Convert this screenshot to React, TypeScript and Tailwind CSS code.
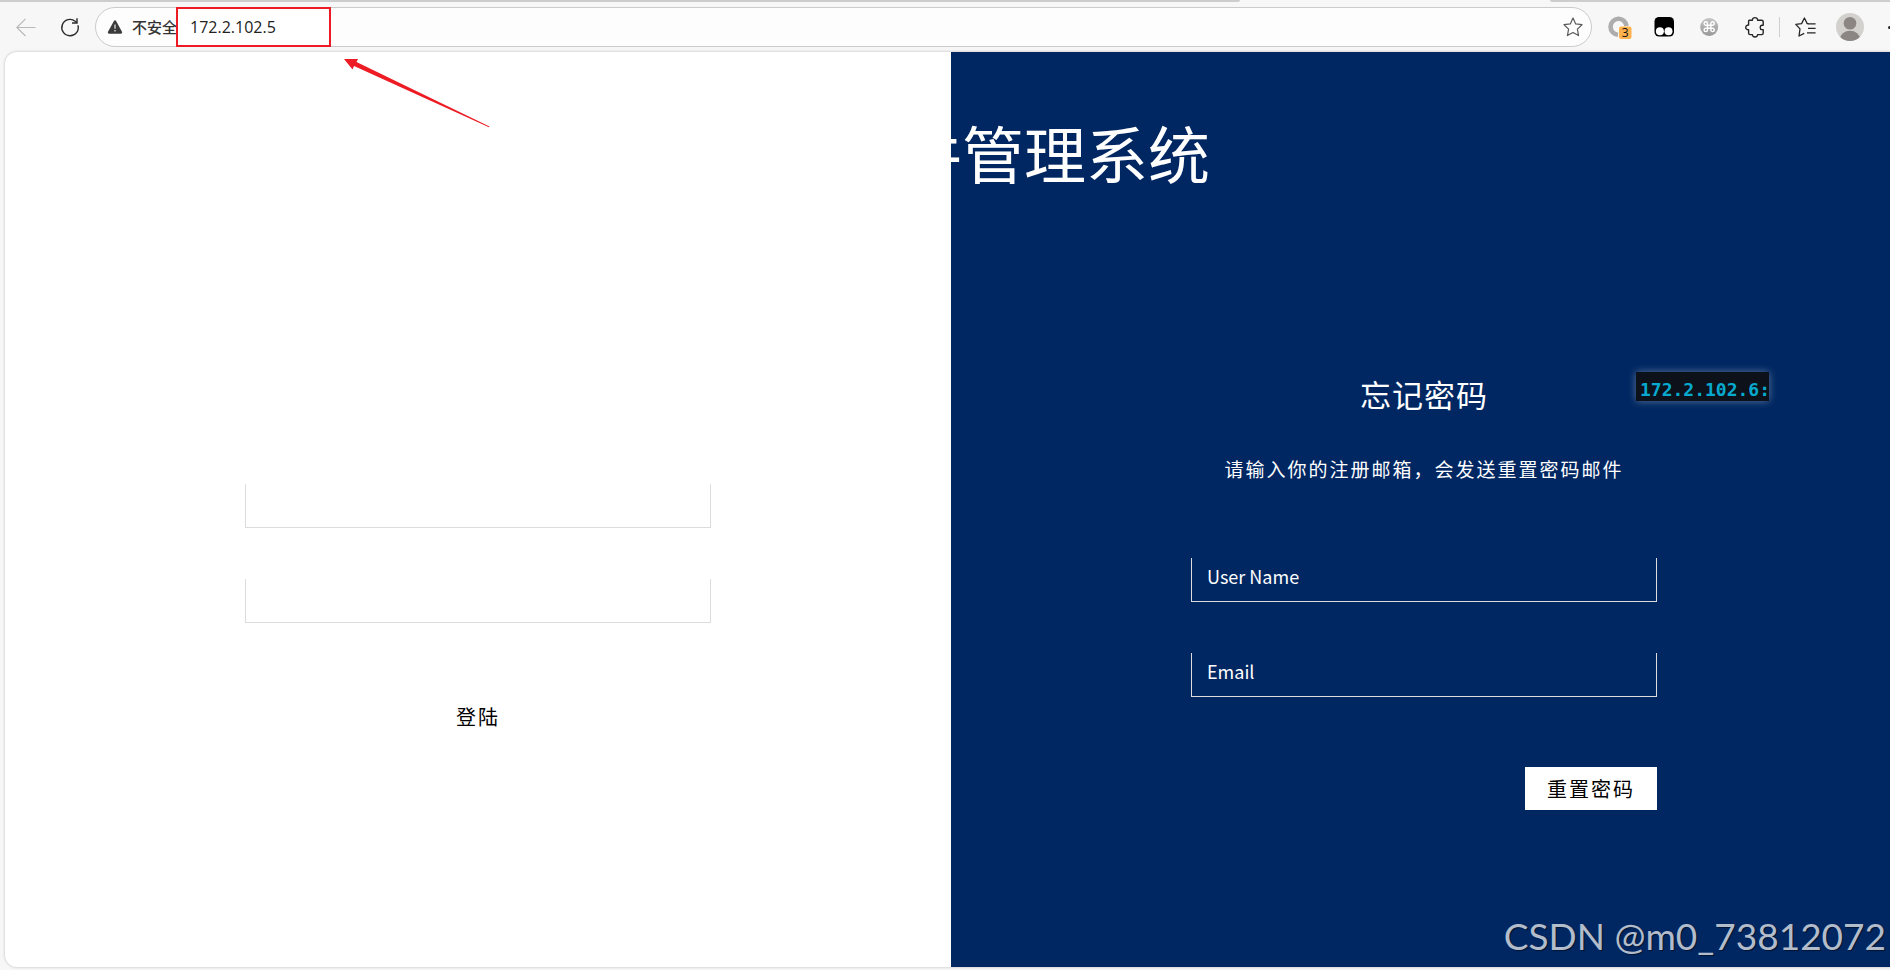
import { useState } from 'react';
import type { FormEvent, ReactNode } from 'react';

const BackIcon = () => (
  <svg viewBox="0 0 20 20" className="w-5 h-5" fill="none" stroke="#b9b9b9" strokeWidth="1.2">
    <path d="M19.5 10.5H0.8M9.5 1.8L0.8 10.5L9.5 19" />
  </svg>
);

const RefreshIcon = () => (
  <svg viewBox="0 0 20 20" className="w-5 h-5" fill="none" stroke="#2b2b2b" strokeWidth="1.4">
    <path d="M17.9 8.2A8.2 8.2 0 1 1 15.2 4.2L17 5.8" />
    <path d="M17 1.2V6H12" />
  </svg>
);

const WarningIcon = () => (
  <svg viewBox="0 0 16 16" className="w-4 h-4 shrink-0">
    <path d="M8 1.3c.5 0 .9.2 1.1.6l5.9 10.9c.5.9-.1 1.9-1.1 1.9H2.1c-1 0-1.6-1-1.1-1.9L6.9 1.9c.2-.4.6-.6 1.1-.6z" fill="#3b3b3b" />
    <path d="M8 5.5v4.2M8 11v1.6" stroke="#c8c8c8" strokeWidth="1.5" />
  </svg>
);

const StarIcon = () => (
  <svg viewBox="0 0 20 20" className="w-5 h-5" fill="none" stroke="#5a5a5a" strokeWidth="1.2" strokeLinejoin="round">
    <path d="M10 1.1L12.7 6.9L19 7.7L14.4 12.1L15.6 18.6L10 15.5L4.4 18.6L5.6 12.1L1 7.7L7.3 6.9Z" />
  </svg>
);

const ExtensionIcon = () => (
  <svg viewBox="0 0 24 24" className="w-6 h-6">
    <path d="M10 19.8A8 8 0 1 1 18.5 11" fill="none" stroke="#adadad" strokeWidth="4.6" />
    <rect x="11" y="11.5" width="12.5" height="12.5" rx="2" fill="#ffb24d" />
    <text x="17.2" y="22" fontSize="12" fontFamily="Open Sans, sans-serif" textAnchor="middle" fill="#111">3</text>
  </svg>
);

const MonkeyIcon = () => (
  <svg viewBox="0 0 24 24" className="w-6 h-6">
    <rect x="1.5" y="2" width="19.5" height="19.5" rx="4.5" fill="#000" />
    <circle cx="6.9" cy="16.3" r="4" fill="#fff" />
    <circle cx="15.5" cy="16.3" r="4" fill="#fff" />
  </svg>
);

const CommandIcon = () => (
  <svg viewBox="0 0 24 24" className="w-6 h-6">
    <defs>
      <linearGradient id="cmd" x1="0" y1="0" x2="0" y2="1">
        <stop offset="0" stopColor="#c4c4c4" />
        <stop offset="1" stopColor="#999" />
      </linearGradient>
    </defs>
    <circle cx="11.2" cy="12" r="9" fill="url(#cmd)" />
    <path
      d="M9.5 8.5v6.4a1.7 1.7 0 1 1-1.7-1.7h6.8a1.7 1.7 0 1 1-1.7 1.7V8.5a1.7 1.7 0 1 1 1.7 1.7H7.8a1.7 1.7 0 1 1 1.7-1.7z"
      fill="none"
      stroke="#fff"
      strokeWidth="1.4"
    />
  </svg>
);

const PuzzleIcon = () => (
  <svg viewBox="0 0 24 24" className="w-6 h-6" fill="none" stroke="#262626" strokeWidth="1.4" strokeLinejoin="round">
    <path d="M6.2 5.2H9.4C9.2 1.7 14.8 1.7 14.6 5.2H18.6C19.6 5.2 20.2 5.8 20.2 6.8V10.2H18.9C16.6 10.4 16.6 14.4 18.9 14.6H20.2V18C20.2 19 19.6 19.6 18.6 19.6H14.6C14.8 22.8 9.2 22.8 9.4 19.6H7.2C6.2 19.6 5.6 19 5.6 18V14.8C1.8 15 1.8 9.8 5.6 10V6.4C5.6 5.6 5.7 5.2 6.2 5.2Z" />
  </svg>
);

const FavoritesIcon = () => (
  <svg viewBox="0 0 24 24" className="w-6 h-6" fill="none" stroke="#262626" strokeWidth="1.3" strokeLinejoin="round">
    <path d="M14.6 8.6H13.2L10.4 3L7.6 8.6L1.8 9.4L6 13.9L5 21L10.2 18.3" />
    <path d="M13.8 8.8H21.6M14 13.3H21.6M13 17.8H21.6" />
  </svg>
);

const AvatarIcon = () => (
  <svg viewBox="0 0 28 28" className="w-7 h-7">
    <defs>
      <clipPath id="avatar">
        <circle cx="14" cy="14" r="14" />
      </clipPath>
    </defs>
    <g clipPath="url(#avatar)">
      <rect width="28" height="28" fill="#d3d1ce" />
      <circle cx="14" cy="10.2" r="6.3" fill="#8b8683" />
      <ellipse cx="14" cy="26" rx="10" ry="8.2" fill="#8b8683" />
    </g>
  </svg>
);

const IconButton = ({ label, children }: { label: string; children: ReactNode }) => (
  <button type="button" aria-label={label} className="shrink-0 cursor-pointer">
    {children}
  </button>
);

// Barra superior do navegador
const Toolbar = () => {
  const [url, setUrl] = useState('172.2.102.5');

  return (
    <header>
      {/* Borda inferior das abas */}
      <div className="flex h-0.5 justify-between">
        <div className="w-[1240px] bg-[#cdcdcd] rounded-br-sm"></div>
        <div className="w-[340px] bg-[#cdcdcd] rounded-bl-sm"></div>
      </div>

      <div className="flex items-center h-[50px] pl-4">
        <IconButton label="返回"><BackIcon /></IconButton>
        <div className="flex ml-6 mr-[15px]">
          <IconButton label="刷新"><RefreshIcon /></IconButton>
        </div>

        <div className="flex flex-1 items-center h-10 pl-[11px] pr-2 bg-[#fdfdfd] border border-[#cbcbcb] rounded-full">
          <WarningIcon />
          <span className="w-11 ml-[9px] text-[15px] font-medium text-[#333] whitespace-nowrap">不安全</span>
          <input
            type="text"
            aria-label="地址"
            value={url}
            onChange={(e) => setUrl(e.target.value)}
            className="w-[155px] h-10 px-3 bg-white border-2 border-[#ed1c24] font-['Open_Sans','Noto_Sans',sans-serif] text-base text-[#222] outline-none"
          />
          <div className="flex ml-auto">
            <IconButton label="收藏"><StarIcon /></IconButton>
          </div>
        </div>

        <div className="flex items-center gap-[21px] ml-4">
          <IconButton label="扩展"><ExtensionIcon /></IconButton>
          <IconButton label="脚本"><MonkeyIcon /></IconButton>
          <IconButton label="快捷键"><CommandIcon /></IconButton>
          <IconButton label="插件"><PuzzleIcon /></IconButton>
        </div>
        <div className="w-px h-5 ml-3 mr-[14px] bg-[#cfcfcf]"></div>
        <div className="flex items-center gap-[18px]">
          <IconButton label="收藏夹"><FavoritesIcon /></IconButton>
          <IconButton label="用户"><AvatarIcon /></IconButton>
        </div>
        <span className="w-0.5 h-[3px] ml-6 bg-[#262626] rounded-l-full"></span>
      </div>
    </header>
  );
};

const App = () => {
  const [login, setLogin] = useState({ usuario: '', senha: '' });
  const [reset, setReset] = useState({ usuario: '', email: '' });

  const handleSubmit = (e: FormEvent) => e.preventDefault();

  return (
    <div className="relative flex flex-col min-h-screen overflow-hidden bg-[#f7f7f7] font-['Noto_Sans_CJK_SC',sans-serif]">
      <Toolbar />

      <main className="grid grid-cols-2 flex-1 ml-[5px] -mr-[7px] mb-[3px] rounded-l-xl overflow-hidden bg-white shadow-[0_0_3px_rgba(0,0,0,0.25)]">
        {/* Login */}
        <section className="flex flex-col items-center pt-[432px]">
          <form onSubmit={handleSubmit} className="flex flex-col items-center w-[466px]">
            <div className="flex flex-col gap-[51px] w-full">
              <input
                type="text"
                aria-label="用户名"
                value={login.usuario}
                onChange={(e) => setLogin({ ...login, usuario: e.target.value })}
                className="w-full h-11 px-[15px] pb-2 border border-t-0 border-[#dcdcdc] text-lg outline-none"
              />
              <input
                type="password"
                aria-label="密码"
                value={login.senha}
                onChange={(e) => setLogin({ ...login, senha: e.target.value })}
                className="w-full h-11 px-[15px] pb-2 border border-t-0 border-[#dcdcdc] text-lg outline-none"
              />
            </div>
            <button type="submit" className="h-[43px] mt-[72px] px-[21px] text-xl tracking-[2px] text-black cursor-pointer">登陆</button>
          </form>
        </section>

        {/* Recuperação de senha */}
        <section className="relative flex flex-col items-center pt-[70px] bg-[#002762] text-white overflow-hidden">
          <h1 className="self-start -ml-[51px] text-[62px] leading-[60px] whitespace-nowrap">件管理系统</h1>

          <form onSubmit={handleSubmit} className="flex flex-col items-center w-[466px] mt-[196px]">
            <h2 className="text-[31px] leading-8 tracking-[1px]">忘记密码</h2>
            <p className="mt-[45px] text-[19px] leading-7 tracking-[2px]">请输入你的注册邮箱，会发送重置密码邮件</p>
            <div className="flex flex-col gap-[51px] w-full mt-[75px]">
              <input
                type="text"
                placeholder="User Name"
                aria-label="User Name"
                value={reset.usuario}
                onChange={(e) => setReset({ ...reset, usuario: e.target.value })}
                className="w-full h-11 px-[15px] pb-2 border border-t-0 border-[#dcdcdc] text-lg placeholder-white outline-none"
              />
              <input
                type="email"
                placeholder="Email"
                aria-label="Email"
                value={reset.email}
                onChange={(e) => setReset({ ...reset, email: e.target.value })}
                className="w-full h-11 px-[15px] pb-2 border border-t-0 border-[#dcdcdc] text-lg placeholder-white outline-none"
              />
            </div>
            <button type="submit" className="self-end h-[43px] mt-[70px] px-[22px] bg-white text-xl tracking-[2px] text-black cursor-pointer">重置密码</button>
          </form>

          {/* Etiqueta com o endereço do servidor */}
          <div className="absolute left-[685px] top-[320px] w-[133px] h-[29px] pl-1 bg-[#0d1119] shadow-[0_0_8px_rgba(255,255,255,0.35)] font-['DejaVu_Sans_Mono',monospace] font-bold text-lg leading-9 text-[#08a9cf]">
            172.2.102.6:
          </div>
        </section>
      </main>

      {/* Seta apontando para o endereço */}
      <svg viewBox="0 0 146 70" className="absolute left-[344px] top-[58px] w-[146px] h-[70px]" fill="#ed1c24">
        <path d="M0 1L14 1L12.5 4L145.5 68.6L145 69.2L10 8L8.5 11.5Z" />
      </svg>

      {/* Marca d'água */}
      <div className="absolute right-1 bottom-3 font-[Lato,sans-serif] text-[37px] leading-[44px] text-[#b3bccb] [text-shadow:1px_1px_1px_rgba(0,0,0,0.5)]">
        CSDN @m0_73812072
      </div>
    </div>
  );
};

export default App;
